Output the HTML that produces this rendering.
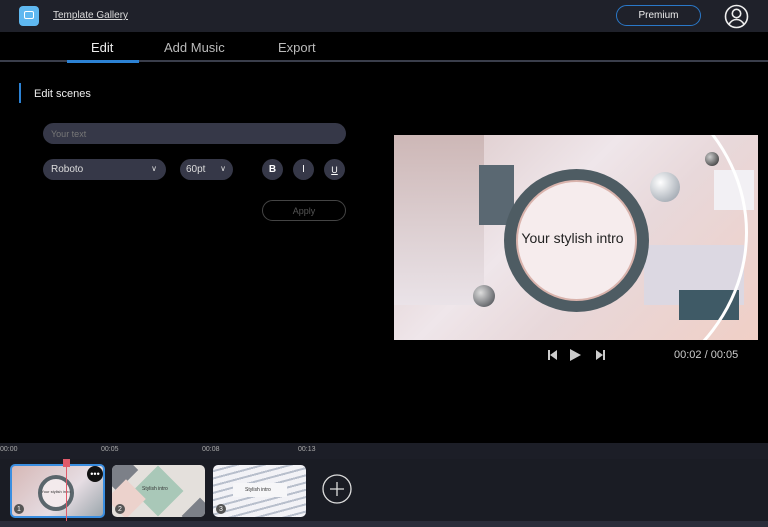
<!DOCTYPE html>
<html><head><style>
*{margin:0;padding:0;box-sizing:border-box}
body{width:768px;height:527px;background:#000;font-family:"Liberation Sans",sans-serif;position:relative;overflow:hidden;color:#fff}
.abs{position:absolute}
.c{display:flex;align-items:center;justify-content:center}
</style></head><body>
<div class="abs" style="left:0;top:0;width:768px;height:32px;background:#1f212a"></div>
<div class="abs" style="left:19px;top:6px;width:20px;height:20px;border-radius:4px;background:#5fb8f0"></div>
<div class="abs" style="left:24px;top:11px;width:10px;height:8px;border:1.5px solid #fff;border-radius:2px"></div>
<div class="abs" style="left:53px;top:10px;font-size:10px;text-decoration:underline;color:#ddd">Template Gallery</div>
<div class="abs c" style="left:616px;top:5px;width:85px;height:21px;border:1.5px solid #2a78c8;border-radius:11px;font-size:10px;color:#eee">Premium</div>
<svg class="abs" style="left:724px;top:4px" width="25" height="25" viewBox="0 0 25 25"><circle cx="12.5" cy="12.5" r="11" fill="none" stroke="#eee" stroke-width="1.6"/><circle cx="12.5" cy="9.5" r="4.2" fill="none" stroke="#eee" stroke-width="1.6"/><path d="M5 20.5c2-4 5-5 7.5-5s5.5 1 7.5 5" fill="none" stroke="#eee" stroke-width="1.6"/></svg>
<div class="abs" style="left:91px;top:40px;font-size:13px;color:#eee">Edit</div>
<div class="abs" style="left:164px;top:40px;font-size:13px;color:#bbb">Add Music</div>
<div class="abs" style="left:278px;top:40px;font-size:13px;color:#bbb">Export</div>
<div class="abs" style="left:0;top:60px;width:768px;height:2px;background:#3a3e4b"></div>
<div class="abs" style="left:67px;top:60px;width:72px;height:3px;background:#2c82d4"></div>
<div class="abs" style="left:19px;top:83px;width:2px;height:20px;background:#2c82d4"></div>
<div class="abs" style="left:34px;top:88px;font-size:11px;color:#eee">Edit scenes</div>
<div class="abs" style="left:43px;top:123px;width:303px;height:21px;border-radius:11px;background:#363848;font-size:9px;color:#777;padding:6px 8px">Your text</div>
<div class="abs" style="left:43px;top:159px;width:123px;height:21px;border-radius:11px;background:#363848;font-size:10px;color:#ddd;padding:5px 8px">Roboto<span style="position:absolute;right:9px;font-size:8px">&#8744;</span></div>
<div class="abs" style="left:180px;top:159px;width:53px;height:21px;border-radius:11px;background:#363848;font-size:10px;color:#ddd;padding:5px 6px">60pt<span style="position:absolute;right:7px;font-size:8px">&#8744;</span></div>
<div class="abs c" style="left:262px;top:159px;width:21px;height:21px;border-radius:50%;background:#363848;font-size:10px;font-weight:bold">B</div>
<div class="abs c" style="left:293px;top:159px;width:21px;height:21px;border-radius:50%;background:#363848;font-size:10px">I</div>
<div class="abs c" style="left:324px;top:159px;width:21px;height:21px;border-radius:50%;background:#363848;font-size:9px;text-decoration:underline">U</div>
<div class="abs c" style="left:262px;top:200px;width:84px;height:21px;border:1.5px solid #444;border-radius:11px;font-size:9px;color:#555">Apply</div>
<!-- preview -->
<div class="abs" style="left:394px;top:135px;width:364px;height:205px;overflow:hidden;background:linear-gradient(135deg,#d9c4c4 0%,#efe6ea 40%,#e8d8da 60%,#f0cfc6 100%)">
<div class="abs" style="left:0;top:0;width:90px;height:170px;background:linear-gradient(#cdb7b6,#eae3e8)"></div>
<div class="abs" style="left:85px;top:30px;width:35px;height:60px;background:#5a6872"></div>
<div class="abs" style="left:250px;top:110px;width:100px;height:60px;background:#dcd8e2"></div>
<div class="abs" style="left:285px;top:155px;width:60px;height:30px;background:#3f5a66"></div>
<div class="abs" style="left:320px;top:35px;width:40px;height:40px;background:#f2f0f4"></div>
<div class="abs" style="left:-50px;top:-80px;width:404px;height:355px;border-radius:50%;border:3px solid #fff;border-left-color:transparent;border-top-color:transparent"></div>
<div class="abs" style="left:110px;top:34px;width:145px;height:143px;border-radius:50%;background:#4e5c63"></div>
<div class="abs" style="left:122px;top:45px;width:121px;height:121px;border-radius:50%;background:#f6eced;border:2px solid #d9b3ac"></div>
<div class="abs" style="left:106px;top:95px;width:145px;text-align:center;font-size:14px;color:#222">Your stylish intro</div>
<div class="abs" style="left:256px;top:37px;width:30px;height:30px;border-radius:50%;background:radial-gradient(circle at 35% 35%,#fff,#8c95a0)"></div>
<div class="abs" style="left:79px;top:150px;width:22px;height:22px;border-radius:50%;background:radial-gradient(circle at 35% 35%,#ddd,#3b3e44)"></div>
<div class="abs" style="left:311px;top:17px;width:14px;height:14px;border-radius:50%;background:radial-gradient(circle at 35% 35%,#ccc,#222)"></div>
</div>
<svg class="abs" style="left:545px;top:348px" width="62" height="14" viewBox="0 0 62 14"><path d="M3 2v10h2V2zM5 7l7-5v10z" fill="#ccc"/><path d="M25 1l11 6-11 6z" fill="#ccc"/><path d="M51 2l7 5-7 5zM58 2v10h2V2z" fill="#ccc"/></svg>
<div class="abs" style="left:674px;top:349px;font-size:11px;color:#ccc">00:02 / 00:05</div>
<!-- timeline -->
<div class="abs" style="left:0;top:443px;width:768px;height:16px;background:#1c1e27"></div>
<div class="abs" style="left:0;top:459px;width:768px;height:62px;background:#1a1c24"></div>
<div class="abs" style="left:0;top:521px;width:768px;height:6px;background:#2a2d3a"></div>
<div class="abs" style="left:0;top:446px;font-size:7px;color:#aaa">00:00</div>
<div class="abs" style="left:101px;top:446px;font-size:7px;color:#aaa">00:05</div>
<div class="abs" style="left:202px;top:446px;font-size:7px;color:#aaa">00:08</div>
<div class="abs" style="left:298px;top:446px;font-size:7px;color:#aaa">00:13</div>
<div class="abs" style="left:10px;top:464px;width:95px;height:54px;border:2px solid #3a8ee0;border-radius:5px;overflow:hidden;background:linear-gradient(135deg,#d6b8b6,#e6dde3 60%,#9ca6ac)">
<div class="abs" style="left:26px;top:9px;width:36px;height:36px;border-radius:50%;border:4px solid #5a666c;background:#f3eaec"></div>
<div class="abs" style="left:26px;top:23px;width:36px;font-size:4px;color:#333;text-align:center">Your stylish intro</div>
</div>
<div class="abs c" style="left:87px;top:466px;width:16px;height:16px;border-radius:50%;background:#111;color:#fff;font-size:9px">•••</div>
<div class="abs" style="left:66px;top:459px;width:1px;height:62px;background:#e05a6a"></div>
<div class="abs" style="left:63px;top:459px;width:7px;height:8px;background:#e05a6a"></div>
<div class="abs" style="left:112px;top:465px;width:93px;height:52px;border-radius:5px;overflow:hidden;background:#e4e0dc">
<div class="abs" style="left:28px;top:8px;width:36px;height:36px;transform:rotate(45deg);background:#a9c8b8"></div>
<div class="abs" style="left:-10px;top:-10px;width:30px;height:30px;transform:rotate(45deg);background:#7c8088"></div>
<div class="abs" style="left:75px;top:38px;width:26px;height:26px;transform:rotate(45deg);background:#7c8088"></div>
<div class="abs" style="left:0;top:20px;width:28px;height:28px;transform:rotate(45deg);background:#ecd2cc"></div>
<div class="abs" style="left:30px;top:21px;font-size:5px;color:#333">Stylish intro</div></div>
<div class="abs" style="left:213px;top:465px;width:93px;height:52px;border-radius:5px;overflow:hidden;background:repeating-linear-gradient(165deg,#f2f2f6 0 5px,#b8bfcc 5px 7px)">
<div class="abs" style="left:20px;top:18px;width:54px;height:14px;background:#f6f6f8"></div>
<div class="abs" style="left:32px;top:22px;font-size:5px;color:#333">Stylish intro</div></div>
<div class="abs c" style="left:14px;top:504px;width:10px;height:10px;border-radius:50%;background:#555;font-size:7px">1</div>
<div class="abs c" style="left:115px;top:504px;width:10px;height:10px;border-radius:50%;background:#555;font-size:7px">2</div>
<div class="abs c" style="left:216px;top:504px;width:10px;height:10px;border-radius:50%;background:#555;font-size:7px">3</div>
<svg class="abs" style="left:322px;top:474px" width="30" height="30" viewBox="0 0 30 30"><circle cx="15" cy="15" r="14" fill="none" stroke="#ddd" stroke-width="1.3"/><path d="M15 8v14M8 15h14" stroke="#ddd" stroke-width="1.3"/></svg>
</body></html>
